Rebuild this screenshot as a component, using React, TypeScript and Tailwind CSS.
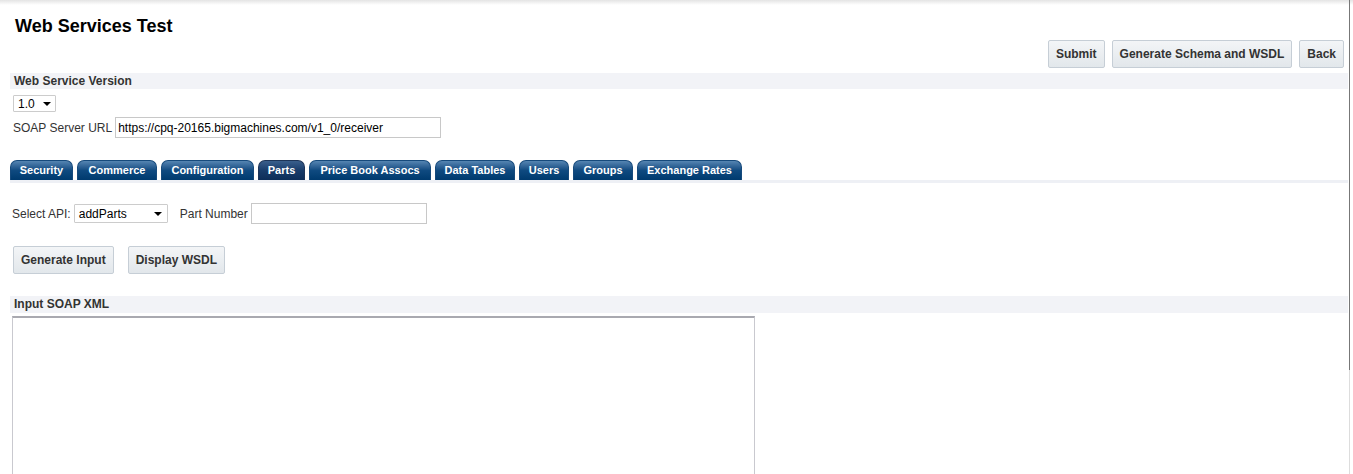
const tabs = [
  { label: 'Security', w: 'w-[63px]', active: false },
  { label: 'Commerce', w: 'w-[80px]', active: false },
  { label: 'Configuration', w: 'w-[93px]', active: false },
  { label: 'Parts', w: 'w-[47px]', active: true },
  { label: 'Price Book Assocs', w: 'w-[122px]', active: false },
  { label: 'Data Tables', w: 'w-[80px]', active: false },
  { label: 'Users', w: 'w-[50px]', active: false },
  { label: 'Groups', w: 'w-[60px]', active: false },
  { label: 'Exchange Rates', w: 'w-[105px]', active: false }
];

function Btn({ label, className = '' }: { label: string; className?: string }) {
  return (
    <button
      className={`h-[28px] rounded-[2px] border border-[#c6ced6] bg-gradient-to-b from-[#f3f5f7] to-[#e2e7eb] px-[7px] text-[12px] font-bold text-[#333] ${className}`}
    >
      {label}
    </button>
  );
}

function Caret() {
  return <span className="ml-auto h-0 w-0 border-x-[4px] border-t-[4px] border-x-transparent border-t-black" />;
}

export default function App() {
  return (
    <div className="relative h-[474px] w-[1353px] overflow-hidden bg-white font-['Liberation_Sans',Arial,sans-serif] text-[12px] text-[#222]">
      <div className="h-[5px] bg-gradient-to-b from-[#e4e4e4] to-white" />
      <div className="absolute right-[3px] top-0 h-[370px] w-px bg-[#777]" />
      <div className="absolute right-[3px] top-[370px] bottom-0 w-px bg-[#ddd]" />

      <div className="pr-[5px]">
        <h1 className="mt-[10px] pl-[15px] text-[18px] font-bold leading-[22px] text-black">Web Services Test</h1>

        <div className="mt-[3px] flex justify-end gap-[7px] pr-[4px]">
          <Btn label="Submit" />
          <Btn label="Generate Schema and WSDL" />
          <Btn label="Back" />
        </div>

        <div className="ml-[10px] mt-[5px] h-[16px] bg-[#f2f3f7] pl-[4px] text-[12px] font-bold leading-[16px] text-[#333]">
          Web Service Version
        </div>

        <div className="ml-[13px] mt-[6px] flex h-[17px] w-[43px] items-center rounded-[1px] border border-[#ccc] bg-white pl-[4px] pr-[4px] text-[12px] text-black">
          1.0
          <Caret />
        </div>

        <div className="ml-[13px] mt-[5px] flex items-center gap-[3px]">
          <span className="text-[#333]">SOAP Server URL</span>
          <div className="flex h-[21px] w-[326px] items-center border border-[#c8c8c8] bg-white pl-[2px] text-[12px] text-black">
            https://cpq-20165.bigmachines.com/v1_0/receiver
          </div>
        </div>

        <div className="ml-[10px] mt-[22px] flex gap-[4px]">
          {tabs.map((t) => (
            <div
              key={t.label}
              className={`flex h-[20px] items-center justify-center rounded-t-[7px] border border-b-0 text-[11px] font-bold leading-none text-white ${t.w} ${
                t.active
                  ? 'border-[#1d3558] bg-gradient-to-b from-[#3a5f8c] via-[#183c6a] to-[#0d2d58]'
                  : 'border-[#164a7c] bg-gradient-to-b from-[#5585b2] via-[#0f4a80] to-[#003a6e]'
              }`}
            >
              {t.label}
            </div>
          ))}
        </div>
        <div className="ml-[10px] h-[3px] bg-[#eef0f5]" />

        <div className="ml-[12px] mt-[20px] flex items-center">
          <span className="text-[#333]">Select API:</span>
          <div className="ml-[3px] flex h-[19px] w-[94px] items-center rounded-[1px] border border-[#ccc] bg-white pl-[4px] pr-[5px] text-black">
            addParts
            <Caret />
          </div>
          <span className="ml-[12px] text-[#333]">Part Number</span>
          <div className="ml-[3px] h-[21px] w-[176px] border border-[#c8c8c8] bg-white" />
        </div>

        <div className="ml-[13px] mt-[22px] flex gap-[14px]">
          <Btn label="Generate Input" />
          <Btn label="Display WSDL" />
        </div>

        <div className="ml-[10px] mt-[22px] h-[17px] bg-[#f2f3f7] pl-[4px] text-[12px] font-bold leading-[17px] text-[#333]">
          Input SOAP XML
        </div>

        <div className="ml-[12px] mt-[3px] h-[200px] w-[743px] border border-t-2 border-[#c9c9cf] border-t-[#a9a9b0] bg-white" />
      </div>
    </div>
  );
}
